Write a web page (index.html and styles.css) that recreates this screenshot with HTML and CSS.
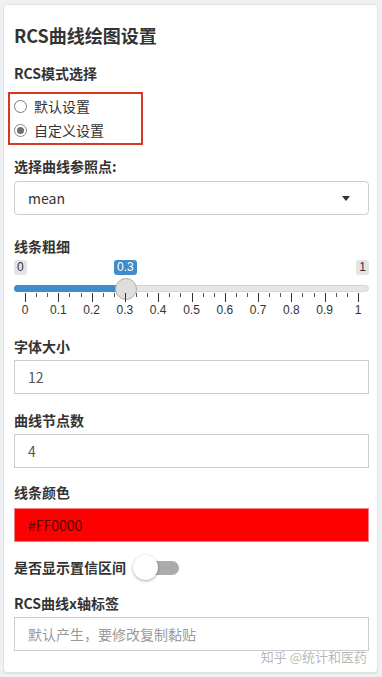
FILE: index.html
```
<!DOCTYPE html>
<html lang="zh">
<head>
<meta charset="utf-8">
<link rel="stylesheet" href="styles.css">
</head>
<body>
<div class="panel">
  <h3 class="title">RCS曲线绘图设置</h3>

  <div class="label lbl-mode">RCS模式选择</div>
  <div class="radio-box">
    <div class="radio"><span class="dot"></span><span>默认设置</span></div>
    <div class="radio"><span class="dot checked"></span><span>自定义设置</span></div>
  </div>

  <div class="label lbl-ref">选择曲线参照点:</div>
  <div class="select"><span>mean</span><span class="caret"></span></div>

  <div class="label lbl-width">线条粗细</div>
  <div class="slider">
    <div class="slider-top">
      <span class="minmax">0</span>
      <span class="minmax">1</span>
      <span class="single" style="left: 100px">0.3</span>
    </div>
    <div class="track">
      <div class="fill" style="width: 111px"></div>
      <div class="handle" style="left: 100px"></div>
    </div>
    <div class="grid">
      <span class="pol" style="left:0%"></span>
      <span class="pol small" style="left:3.33%"></span><span class="pol small" style="left:6.67%"></span>
      <span class="pol" style="left:10%"></span>
      <span class="pol small" style="left:13.33%"></span><span class="pol small" style="left:16.67%"></span>
      <span class="pol" style="left:20%"></span>
      <span class="pol small" style="left:23.33%"></span><span class="pol small" style="left:26.67%"></span>
      <span class="pol" style="left:30%"></span>
      <span class="pol small" style="left:33.33%"></span><span class="pol small" style="left:36.67%"></span>
      <span class="pol" style="left:40%"></span>
      <span class="pol small" style="left:43.33%"></span><span class="pol small" style="left:46.67%"></span>
      <span class="pol" style="left:50%"></span>
      <span class="pol small" style="left:53.33%"></span><span class="pol small" style="left:56.67%"></span>
      <span class="pol" style="left:60%"></span>
      <span class="pol small" style="left:63.33%"></span><span class="pol small" style="left:66.67%"></span>
      <span class="pol" style="left:70%"></span>
      <span class="pol small" style="left:73.33%"></span><span class="pol small" style="left:76.67%"></span>
      <span class="pol" style="left:80%"></span>
      <span class="pol small" style="left:83.33%"></span><span class="pol small" style="left:86.67%"></span>
      <span class="pol" style="left:90%"></span>
      <span class="pol small" style="left:93.33%"></span><span class="pol small" style="left:96.67%"></span>
      <span class="pol" style="left:100%"></span>
      <span class="gtext" style="left:0%">0</span>
      <span class="gtext" style="left:10%">0.1</span>
      <span class="gtext" style="left:20%">0.2</span>
      <span class="gtext" style="left:30%">0.3</span>
      <span class="gtext" style="left:40%">0.4</span>
      <span class="gtext" style="left:50%">0.5</span>
      <span class="gtext" style="left:60%">0.6</span>
      <span class="gtext" style="left:70%">0.7</span>
      <span class="gtext" style="left:80%">0.8</span>
      <span class="gtext" style="left:90%">0.9</span>
      <span class="gtext" style="left:100%">1</span>
    </div>
  </div>

  <div class="label lbl-font">字体大小</div>
  <div class="input">12</div>

  <div class="label lbl-knots">曲线节点数</div>
  <div class="input">4</div>

  <div class="label lbl-color">线条颜色</div>
  <div class="input color">#FF0000</div>

  <div class="toggle-row">
    <span class="label inline">是否显示置信区间</span>
    <span class="switch"><span class="sw-track"></span><span class="sw-thumb"></span></span>
  </div>

  <div class="label lbl-x">RCS曲线x轴标签</div>
  <div class="input placeholder">默认产生，要修改复制黏贴</div>

  <div class="watermark">知乎 @统计和医药</div>
</div>
</body>
</html>
```
FILE: styles.css
```
* { box-sizing: border-box; }
html, body { margin: 0; padding: 0; }
body {
  background: #eef0f4;
  font-family: "Noto Sans CJK SC", "Noto Sans", sans-serif;
  color: #333;
  width: 382px;
  height: 677px;
  overflow: hidden;
}
.panel {
  position: relative;
  margin: 4px 4px 0 3px;
  width: 375px;
  height: 669px;
  background: #fff;
  border: 1px solid #e2e2e2;
  border-radius: 4px;
  box-shadow: 0 1px 1px rgba(0,0,0,0.06);
  padding: 19px 8px 0 10px;
}
.title {
  margin: 0;
  font-size: 18px;
  line-height: 22px;
  font-weight: 700;
  color: #333;
}
.label {
  font-size: 14px;
  line-height: 20px;
  font-weight: 700;
  color: #333;
}
.lbl-mode { margin-top: 17px; }
.radio-box {
  margin: 9px 0 0 -6px;
  width: 135px;
  border: 2px solid #d8381f;
  padding: 0 0 1px 4px;
}
.radio {
  display: flex;
  align-items: center;
  height: 24px;
  font-size: 14px;
}
.dot {
  width: 13px;
  height: 13px;
  border-radius: 50%;
  border: 1px solid #7a7a7a;
  background: #fff;
  margin-right: 7px;
  display: flex;
  align-items: center;
  justify-content: center;
}
.dot.checked { border-color: #8a8a8a; }
.dot.checked::after {
  content: "";
  width: 7px;
  height: 7px;
  border-radius: 50%;
  background: #6f6f6f;
}
.lbl-ref { margin-top: 11px; }
.select {
  margin-top: 5px;
  height: 34px;
  border: 1px solid #ccc;
  border-radius: 4px;
  display: flex;
  align-items: center;
  justify-content: space-between;
  padding: 0 18px 0 13px;
  font-size: 14px;
  color: #333;
}
.caret {
  width: 0; height: 0;
  border-left: 4.5px solid transparent;
  border-right: 4.5px solid transparent;
  border-top: 5px solid #333;
}
.lbl-width { margin-top: 21px; }
.slider {
  margin-top: 4px;
  width: 355px;
  font-family: "Liberation Sans", Arial, sans-serif;
}
.slider-top {
  position: relative;
  height: 15px;
  display: flex;
  justify-content: space-between;
}
.minmax {
  background: #e4e4e4;
  color: #333;
  font-size: 12px;
  line-height: 15px;
  padding: 0 3px;
  border-radius: 3px;
}
.single {
  position: absolute;
  top: 0;
  background: #428bca;
  color: #fff;
  font-size: 12px;
  line-height: 15px;
  padding: 0 3px;
  border-radius: 3px;
}
.track {
  position: relative;
  margin-top: 10px;
  height: 7px;
  background: #e6e6e6;
  border: 1px solid #d6d6d6;
  border-radius: 4px;
}
.fill {
  position: absolute;
  left: -1px; top: -1px; bottom: -1px;
  background: #428bca;
  border-radius: 4px 0 0 4px;
}
.handle {
  position: absolute;
  top: -8px;
  width: 22px;
  height: 22px;
  border-radius: 50%;
  background: #dedede;
  border: 1px solid #b0b0b0;
}
.grid {
  position: relative;
  margin: 1px 11px 0;
  height: 24px;
}
.pol {
  position: absolute;
  top: 0;
  width: 1px;
  height: 9px;
  background: #333;
}
.pol.small { height: 4px; background: #555; }
.gtext {
  position: absolute;
  top: 11px;
  font-size: 12px;
  line-height: 13px;
  color: #333;
  transform: translateX(-50%);
}
.lbl-font { margin-top: 19px; }
.input {
  margin-top: 4px;
  height: 34px;
  border: 1px solid #ccc;
  display: flex;
  align-items: center;
  padding: 0 13px;
  font-size: 14px;
  color: #555;
}
.lbl-knots { margin-top: 16px; }
.lbl-color { margin-top: 14px; }
.input.color {
  margin-top: 6px;
  background: #ff0000;
  border-color: #f08080;
  color: #5a0000;
}
.toggle-row {
  margin-top: 15px;
  height: 20px;
  display: flex;
  align-items: center;
}
.switch {
  position: relative;
  width: 46px;
  height: 25px;
  margin-left: 7px;
}
.sw-track {
  position: absolute;
  left: 6px;
  right: 0;
  top: 6px;
  height: 14px;
  border-radius: 7px;
  background: #ababab;
}
.sw-thumb {
  position: absolute;
  left: 0; top: 0;
  width: 25px;
  height: 25px;
  border-radius: 50%;
  background: #fff;
  box-shadow: 0 1px 3px rgba(0,0,0,0.35);
}
.lbl-x { margin-top: 16px; }
.input.placeholder { color: #9a9a9a; }
.watermark {
  position: absolute;
  right: 10px;
  bottom: 6px;
  font-size: 13px;
  color: rgba(120,120,120,0.55);
  letter-spacing: 0;
}
```
